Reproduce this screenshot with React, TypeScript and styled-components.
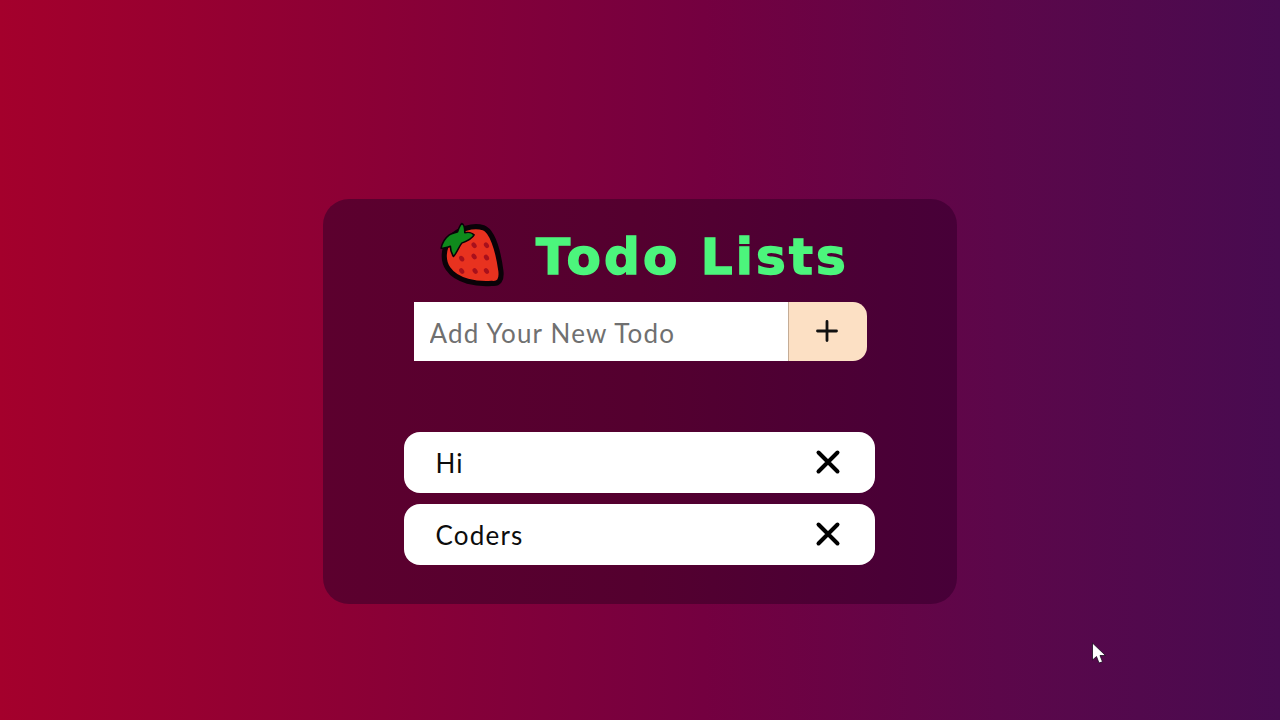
import React from "react";
import styled, { createGlobalStyle } from "styled-components";

const Global = createGlobalStyle`
  html, body { margin: 0; padding: 0; height: 100%; overflow: hidden; }
  body { font-family: "Lato", "Liberation Sans", sans-serif; }
`;

const Page = styled.main`
  position: relative;
  width: 1280px;
  height: 720px;
  display: flex;
  align-items: flex-start;
  justify-content: center;
  padding-top: 199px;
  box-sizing: border-box;
  background: linear-gradient(90deg, #a4002c 0%, #8a0036 30%, #740040 55%, #5c074a 78%, #480b50 100%);
`;

const Card = styled.section`
  width: 634px;
  height: 405px;
  border-radius: 26px;
  background: linear-gradient(90deg, #5c002e 0%, #54002f 50%, #470038 100%);
  display: flex;
  flex-direction: column;
  align-items: center;
  box-sizing: border-box;
  padding-top: 23px;
`;

const Header = styled.header`
  display: flex;
  align-items: center;
  gap: 32px;
  height: 66px;
  width: 410px;
  margin-left: 6px;
`;

const Logo = styled.svg`
  flex: none;
  width: 66px;
  height: 66px;
`;

const Title = styled.h1`
  margin: 4px 0 0;
  font-family: "DejaVu Sans", sans-serif;
  font-weight: 700;
  font-size: 50px;
  line-height: 62px;
  letter-spacing: 3.1px;
  color: #4cf57c;
  -webkit-text-stroke: 1.5px #4cf57c;
  stroke-linejoin: round;
  white-space: nowrap;
`;

const Form = styled.form`
  display: flex;
  width: 453px;
  height: 59px;
  margin-top: 14px;
`;

const Input = styled.input`
  flex: 1;
  min-width: 0;
  box-sizing: border-box;
  border: 0;
  outline: 0;
  background: #fff;
  padding: 2px 0 0 16px;
  font-family: "Lato", sans-serif;
  font-size: 26px;
  letter-spacing: 1.2px;
  color: #222;
  &::placeholder { color: #707070; opacity: 1; }
`;

const AddButton = styled.button`
  width: 79px;
  border: 0;
  border-left: 1px solid #c4ac96;
  border-radius: 0 14px 14px 0;
  background: #fce0c4;
  padding: 0 1px 1px 0;
  display: flex;
  align-items: center;
  justify-content: center;
  color: #111;
`;

const List = styled.ul`
  list-style: none;
  margin: 71px 0 0 -2px;
  padding: 0;
  width: 471px;
  display: flex;
  flex-direction: column;
  gap: 11px;
`;

const Item = styled.li`
  height: 61px;
  box-sizing: border-box;
  background: #fff;
  border-radius: 16px;
  display: flex;
  align-items: center;
  justify-content: space-between;
  padding: 0 34px 0 32px;
  font-family: "Lato", sans-serif;
  font-size: 26px;
  letter-spacing: 1.2px;
  color: #0c0c0c;
`;

const Remove = styled.button`
  border: 0;
  background: transparent;
  padding: 0;
  width: 26px;
  height: 26px;
  margin-top: -2px;
  display: flex;
  color: #000;
`;

const Cursor = styled.svg`
  position: absolute;
  left: 1091px;
  top: 642px;
`;

const Strawberry = () => (
  <Logo viewBox="2 2.5 64 64" aria-hidden="true">
    <path d="M14 18 C22 9 36 5 46 8 C54 11 60 28 63 50 C64 59 61 63 54 62 C40 63 20 60 12 48 C6 40 7 28 14 18 Z" fill="#e8321f" stroke="#0a0208" strokeWidth="5" strokeLinejoin="round" />
    <path d="M25 4 C28 5 28 10 28 13 C31 12 35 13 37 15 C35 19 30 21 25 23 C22 27 20 33 17 36 C15 33 14 29 14 26 C11 27 8 28 5 28 C6 23 9 18 13 15 C16 13 19 13 21 12 C22 9 23 6 25 4 Z" fill="#0f8a1c" stroke="#0a0208" strokeWidth="1.5" strokeLinejoin="round" />
    {[
      [37, 25], [49, 25], [25, 38], [37, 36], [49, 37], [25, 50], [38, 50], [49, 50],
    ].map(([x, y]) => (
      <ellipse key={`${x}-${y}`} cx={x} cy={y} rx="2.2" ry="3" fill="#a8101c" transform={`rotate(-35 ${x} ${y})`} />
    ))}
  </Logo>
);

const Plus = () => (
  <svg width="26" height="26" viewBox="0 0 26 26" aria-hidden="true">
    <path d="M13 3.5 V22.5 M3.5 13 H22.5" stroke="currentColor" strokeWidth="2.8" strokeLinecap="round" />
  </svg>
);

const Cross = () => (
  <svg width="26" height="26" viewBox="0 0 26 26" aria-hidden="true">
    <path d="M3.5 3.5 L22.5 22.5 M22.5 3.5 L3.5 22.5" stroke="currentColor" strokeWidth="4" strokeLinecap="round" />
  </svg>
);

export default function App() {
  return (
    <Page>
      <Global />
      <Card>
        <Header>
          <Strawberry />
          <Title>Todo Lists</Title>
        </Header>
        <Form onSubmit={(e) => e.preventDefault()}>
          <Input placeholder="Add Your New Todo" />
          <AddButton type="submit" aria-label="Add"><Plus /></AddButton>
        </Form>
        <List>
          {["Hi", "Coders"].map((t) => (
            <Item key={t}>
              {t}
              <Remove aria-label={`Remove ${t}`}><Cross /></Remove>
            </Item>
          ))}
        </List>
      </Card>
      <Cursor width="16" height="24" viewBox="0 0 16 24" aria-hidden="true">
        <path d="M1.5 1 V18 L5.5 14.5 L8 21 L11.5 19.8 L9 13.5 L14.5 13.5 Z" fill="#fff" stroke="#1a0a20" strokeWidth="0.8" />
      </Cursor>
    </Page>
  );
}
